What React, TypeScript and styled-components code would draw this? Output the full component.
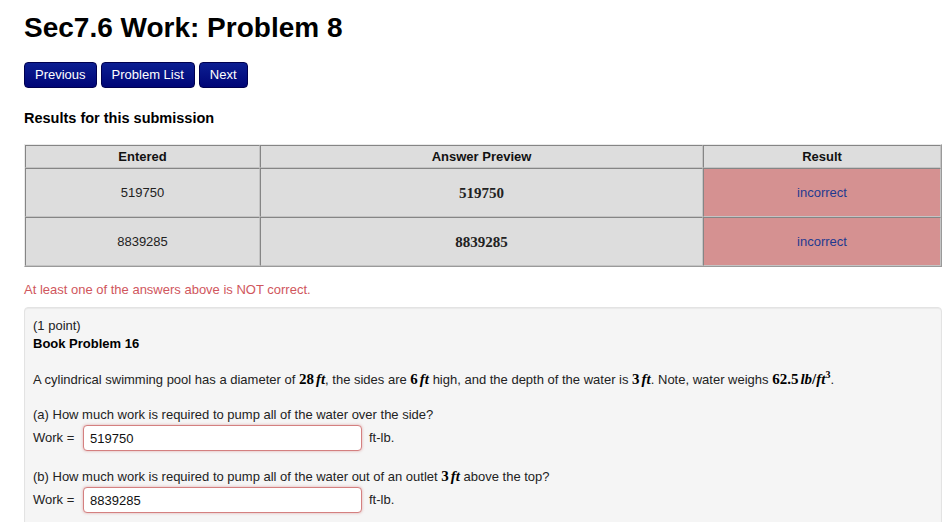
import React from "react";
import styled, { createGlobalStyle } from "styled-components";

const Global = createGlobalStyle`
  html, body { margin: 0; padding: 0; overflow: hidden; background: #fff; }
  body { font-family: "Liberation Sans", Arial, sans-serif; font-size: 13px; line-height: 18px; color: #222; }
`;

const Page = styled.div`
  width: 918px;
  margin-left: 24px;
  display: flex;
  flex-direction: column;
`;

const Title = styled.h1`
  margin: 12px 0 0;
  font-size: 28px;
  line-height: 32px;
  font-weight: bold;
  color: #000;
`;

const NavBar = styled.div`
  display: flex;
  gap: 4px;
  margin-top: 18px;
`;

const NavButton = styled.button`
  height: 26px;
  padding: 0 10px;
  border: 1px solid #00004f;
  border-radius: 4px;
  background: linear-gradient(to bottom, #0c1f92, #000677);
  color: #fff;
  font-family: "Liberation Sans", Arial, sans-serif;
  font-size: 13px;
  line-height: 24px;
  cursor: pointer;
`;

const SectionHeading = styled.h3`
  margin: 21px 0 0;
  font-size: 14.5px;
  line-height: 18px;
  font-weight: bold;
  color: #000;
`;

const ResultsTable = styled.table`
  margin-top: 17px;
  width: 918px;
  border-collapse: separate;
  border-spacing: 0;
  border: 1px solid;
  border-color: #eaeaea #9a9a9a #9a9a9a #eaeaea;
  table-layout: fixed;
`;

const HeadCell = styled.th<{ $w: number }>`
  box-sizing: border-box;
  width: ${(p) => p.$w}px;
  height: 23px;
  padding: 0;
  background: #dddddd;
  border: 1px solid;
  border-color: #858585 #c4c4c4 #c4c4c4 #858585;
  font-size: 13px;
  font-weight: bold;
  text-align: center;
  color: #111;
`;

const Cell = styled.td<{ $bad?: boolean; $math?: boolean }>`
  box-sizing: border-box;
  height: 49px;
  padding: 0;
  background: ${(p) => (p.$bad ? "#d59191" : "#dddddd")};
  border: 1px solid;
  border-color: #858585 #c4c4c4 #c4c4c4 #858585;
  text-align: center;
  vertical-align: middle;
  color: ${(p) => (p.$bad ? "#1f3a90" : "#222")};
  font-family: ${(p) =>
    p.$math ? '"Liberation Serif", "Times New Roman", serif' : '"Liberation Sans", Arial, sans-serif'};
  font-size: ${(p) => (p.$math ? "15px" : "13px")};
  font-weight: ${(p) => (p.$math ? "bold" : "normal")};
`;

const ErrorNote = styled.div`
  margin-top: 14px;
  color: #d0565d;
`;

const Well = styled.div`
  margin-top: 8px;
  padding: 9px 8px 12px;
  background: #f5f5f5;
  border: 1px solid #e3e3e3;
  border-radius: 4px;
  box-shadow: inset 0 1px 1px rgba(0, 0, 0, 0.05);
  display: flex;
  flex-direction: column;
`;

const Line = styled.div<{ $gap?: number }>`
  margin-top: ${(p) => p.$gap ?? 0}px;
  white-space: nowrap;
`;

const Bold = styled.span`
  font-weight: bold;
  color: #000;
`;

const MathSpan = styled.span`
  font-family: "Liberation Serif", "Times New Roman", serif;
  font-size: 15px;
  font-weight: bold;
  line-height: 1;
  color: #000;
`;

const MathVar = styled.i<{ $lead?: boolean }>`
  font-style: italic;
  margin-left: ${(p) => (p.$lead ? "2px" : "0")};
`;

const Sup = styled.sup`
  font-size: 10px;
  line-height: 0;
  vertical-align: 6px;
`;

const AnswerRow = styled.div`
  margin-top: 1px;
  display: flex;
  align-items: center;
  height: 26px;
`;

const AnswerLabel = styled.span`
  width: 50px;
`;

const AnswerInput = styled.input`
  box-sizing: border-box;
  width: 279px;
  height: 26px;
  padding: 0 6px;
  border: 1px solid #d48080;
  border-radius: 4px;
  background: #fff;
  box-shadow: 0 0 3px rgba(200, 80, 80, 0.45);
  font-family: "Liberation Sans", Arial, sans-serif;
  font-size: 13px;
  color: #111;
  outline: none;
`;

const Unit = styled.span`
  margin-left: 7px;
`;

const Q = ({ n, u }: { n: string; u: string }) => (
  <MathSpan>
    {n}
    <MathVar $lead>{u}</MathVar>
  </MathSpan>
);

const rows = [
  { entered: "519750", preview: "519750" },
  { entered: "8839285", preview: "8839285" },
];

export default function App() {
  return (
    <>
      <Global />
      <Page>
        <Title>Sec7.6 Work: Problem 8</Title>
        <NavBar>
          <NavButton>Previous</NavButton>
          <NavButton>Problem List</NavButton>
          <NavButton>Next</NavButton>
        </NavBar>
        <SectionHeading>Results for this submission</SectionHeading>
        <ResultsTable>
          <thead>
            <tr>
              <HeadCell $w={235}>Entered</HeadCell>
              <HeadCell $w={443}>Answer Preview</HeadCell>
              <HeadCell $w={238}>Result</HeadCell>
            </tr>
          </thead>
          <tbody>
            {rows.map((r) => (
              <tr key={r.entered}>
                <Cell>{r.entered}</Cell>
                <Cell $math>{r.preview}</Cell>
                <Cell $bad>incorrect</Cell>
              </tr>
            ))}
          </tbody>
        </ResultsTable>
        <ErrorNote>At least one of the answers above is NOT correct.</ErrorNote>
        <Well>
          <Line>(1 point)</Line>
          <Line>
            <Bold>Book Problem 16</Bold>
          </Line>
          <Line $gap={18}>
            A cylindrical swimming pool has a diameter of <Q n="28" u="ft" />, the sides are{" "}
            <Q n="6" u="ft" /> high, and the depth of the water is <Q n="3" u="ft" />. Note, water weighs{" "}
            <MathSpan>
              62.5<MathVar $lead>lb</MathVar>/<MathVar>ft</MathVar>
              <Sup>3</Sup>
            </MathSpan>
            .
          </Line>
          <Line $gap={17}>(a) How much work is required to pump all of the water over the side?</Line>
          <AnswerRow>
            <AnswerLabel>Work =</AnswerLabel>
            <AnswerInput defaultValue="519750" />
            <Unit>ft-lb.</Unit>
          </AnswerRow>
          <Line $gap={17}>
            (b) How much work is required to pump all of the water out of an outlet <Q n="3" u="ft" /> above
            the top?
          </Line>
          <AnswerRow>
            <AnswerLabel>Work =</AnswerLabel>
            <AnswerInput defaultValue="8839285" />
            <Unit>ft-lb.</Unit>
          </AnswerRow>
        </Well>
      </Page>
    </>
  );
}
